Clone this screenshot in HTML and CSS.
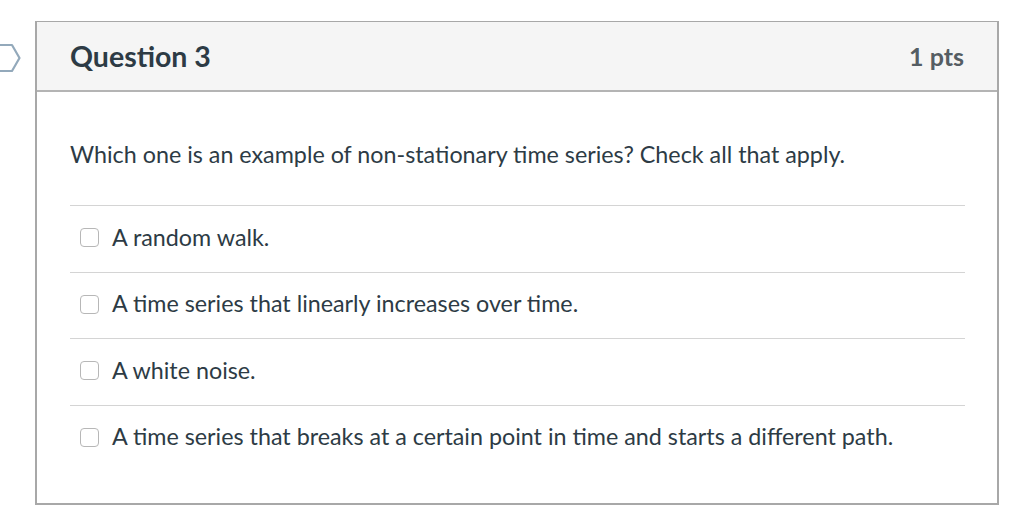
FILE: index.html
```html
<!DOCTYPE html>
<html>
<head>
<meta charset="utf-8">
<link rel="stylesheet" href="styles.css">
</head>
<body>
<div class="page">
  <svg class="flag" width="22" height="30" viewBox="0 0 22 30"><path d="M-6 2 H12 L19.5 15 L12 28 H-6" fill="none" stroke="#93a9bb" stroke-width="2.2" stroke-linejoin="round"/></svg>
  <div class="card">
    <div class="header">
      <span class="title">Question 3</span>
      <span class="pts">1 pts</span>
    </div>
    <div class="body">
      <p class="question">Which one is an example of non-stationary time series? Check all that apply.</p>
      <div class="answers">
        <label class="answer"><span class="box"></span><span>A random walk.</span></label>
        <label class="answer"><span class="box"></span><span>A time series that linearly increases over time.</span></label>
        <label class="answer"><span class="box"></span><span>A white noise.</span></label>
        <label class="answer"><span class="box"></span><span>A time series that breaks at a certain point in time and starts a different path.</span></label>
      </div>
    </div>
  </div>
</div>
</body>
</html>
```
FILE: styles.css
```css
html, body { margin: 0; padding: 0; background: #fff; }
body { font-family: Lato, "Open Sans", sans-serif; color: #2d3b45; }
.page { position: relative; padding: 21px 0 0 35px; width: 964px; }
.flag { position: absolute; left: 0; top: 43px; }
.card {
  border: 1px solid #a8a8a8;
  border-width: 1px 2px 2px 2px;
  box-shadow: 0 1px 0 #cfcfcf;
  height: 484px;
  box-sizing: border-box;
}
.header {
  background: #f5f5f5;
  height: 70px;
  border-bottom: 2px solid #b4b4b4;
  display: flex;
  align-items: center;
  justify-content: space-between;
  padding: 0 33px 0 33px;
  box-sizing: border-box;
}
.title { font-weight: 700; font-size: 28.5px; color: #2d3b45; }
.pts { font-weight: 700; font-size: 25px; color: #555d63; }
.body { padding: 0 32px 0 33px; }
.question { margin: 47px 0 0 0; font-size: 23.3px; line-height: 30px; }
.answers { margin-top: 36px; }
.answer {
  display: flex;
  align-items: center;
  gap: 13px;
  height: 66.5px;
  box-sizing: border-box;
  padding-bottom: 4px;
  border-top: 1px solid #d4d4d4;
  padding-left: 10px;
  font-size: 23.3px;
}
.box {
  width: 17px; height: 17px;
  border: 1px solid #b7b7b7;
  border-radius: 4px;
  background: #fff;
  flex: none;
  margin-top: 2px;
}
```
